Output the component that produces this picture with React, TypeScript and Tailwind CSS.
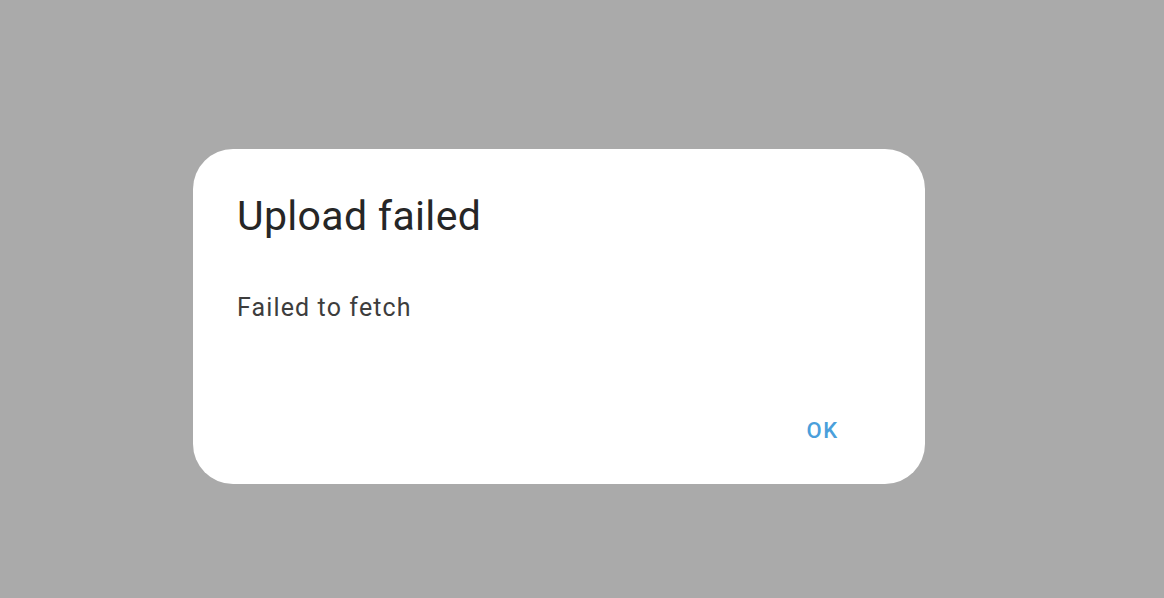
export default function App() {
  return (
    <div className="h-[598px] w-full bg-[#aaaaaa] pt-[149px] pl-[193px] font-['Roboto',sans-serif]">
      <div className="flex h-[335px] w-[732px] flex-col rounded-[40px] bg-white">
        <h2 className="mt-[43px] ml-[44px] text-[41px] leading-[48px] font-normal tracking-[0.008em] text-[#262626]">
          Upload failed
        </h2>
        <p className="mt-[53px] ml-[44px] text-[25px] leading-[30px] tracking-[0.045em] text-[#3d3d3d]">
          Failed to fetch
        </p>
        <div className="mt-auto mb-[41px] flex justify-end pr-[86px]">
          <button className="text-[22px] leading-[24px] font-medium tracking-[0.08em] text-[#4a9fdb]">
            OK
          </button>
        </div>
      </div>
    </div>
  )
}
